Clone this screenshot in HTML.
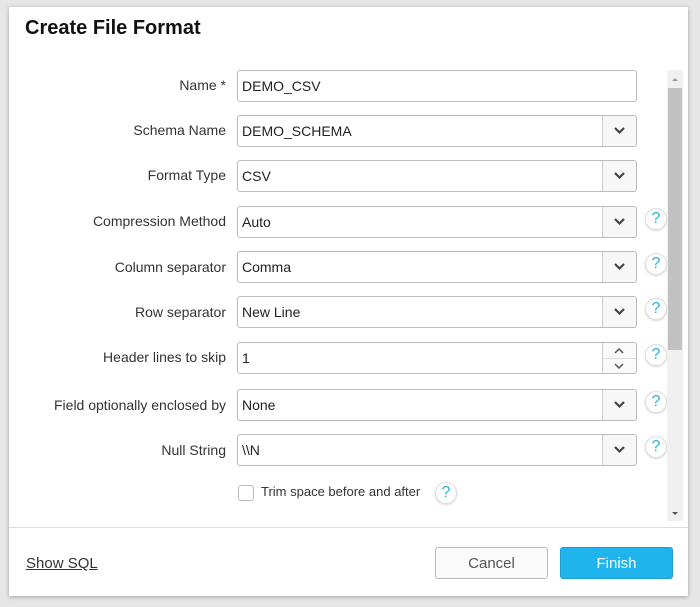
<!DOCTYPE html>
<html><head><style>
body{margin:0;width:700px;height:607px;background:#dcdcdc;font-family:"Liberation Sans",sans-serif;position:relative;overflow:hidden}
.bg{position:absolute;left:0;top:0;width:700px;height:607px;background:#e6e6e6}
.dlg{position:absolute;left:9px;top:7px;width:679px;height:589px;background:#fff;box-shadow:0 1px 4px rgba(0,0,0,.3)}
h1{position:absolute;left:16px;top:10px;margin:0;font-size:20px;font-weight:bold;color:#111}
.lab{position:absolute;right:462px;font-size:14px;color:#333;text-align:right;white-space:nowrap}
.in{position:absolute;left:228px;width:394px;height:30px;border:1px solid #bbb;border-radius:3px;font-size:14px;color:#222;line-height:30px;padding-left:4px;box-sizing:content-box}
.dd{position:absolute;right:0;top:0;width:33px;height:30px;border-left:1px solid #ccc;background:#f7f7f7;border-radius:0 3px 3px 0}
.dd svg{position:absolute;left:11px;top:11px}
.q{position:absolute;left:636px;width:20px;height:20px;border:1px solid #ddd;border-radius:50%;color:#2ab0d8;font-size:16px;text-align:center;line-height:20px;box-shadow:0 1px 2px rgba(0,0,0,.15);background:#fff}
.sb{position:absolute;left:658px;top:63px;width:16px;height:451px;background:#f0f0f0;z-index:2}
.th{position:absolute;left:1px;top:18px;width:14px;height:262px;background:#c1c1c1}
.foot{position:absolute;left:0;top:520px;width:679px;border-top:1px solid #ddd}
.btn{position:absolute;top:540px;height:30px;width:111px;border-radius:3px;font-size:15px;text-align:center;line-height:32px}
</style></head><body>
<div class="bg"></div>
<div class="dlg">
<h1>Create File Format</h1>
<div class="lab" style="top:70px">Name *</div>
<div class="in" style="top:63px">DEMO_CSV</div>

<div class="lab" style="top:115px">Schema Name</div>
<div class="in" style="top:108px">DEMO_SCHEMA<div class="dd"><svg width="11" height="8"><path d="M1 1l4.5 4.5L10 1" stroke="#444" stroke-width="2.2" fill="none"/></svg></div></div>

<div class="lab" style="top:160px">Format Type</div>
<div class="in" style="top:153px">CSV<div class="dd"><svg width="11" height="8"><path d="M1 1l4.5 4.5L10 1" stroke="#444" stroke-width="2.2" fill="none"/></svg></div></div>

<div class="lab" style="top:206px">Compression Method</div>
<div class="in" style="top:199px">Auto<div class="dd"><svg width="11" height="8"><path d="M1 1l4.5 4.5L10 1" stroke="#444" stroke-width="2.2" fill="none"/></svg></div></div>
<div class="q" style="top:201px">?</div>

<div class="lab" style="top:252px">Column separator</div>
<div class="in" style="top:244px">Comma<div class="dd"><svg width="11" height="8"><path d="M1 1l4.5 4.5L10 1" stroke="#444" stroke-width="2.2" fill="none"/></svg></div></div>
<div class="q" style="top:246px">?</div>

<div class="lab" style="top:297px">Row separator</div>
<div class="in" style="top:289px">New Line<div class="dd"><svg width="11" height="8"><path d="M1 1l4.5 4.5L10 1" stroke="#444" stroke-width="2.2" fill="none"/></svg></div></div>
<div class="q" style="top:291px">?</div>

<div class="lab" style="top:342px">Header lines to skip</div>
<div class="in" style="top:335px">1<div class="dd" style="background:#fafafa"><div style="position:absolute;left:0;top:15px;width:33px;border-top:1px solid #ddd"></div><svg width="10" height="6" style="left:11px;top:5px"><path d="M1 5l4-4 4 4" stroke="#555" stroke-width="1.5" fill="none"/></svg><svg width="10" height="6" style="left:11px;top:20px"><path d="M1 1l4 4 4-4" stroke="#555" stroke-width="1.5" fill="none"/></svg></div></div>
<div class="q" style="top:337px">?</div>

<div class="lab" style="top:390px">Field optionally enclosed by</div>
<div class="in" style="top:382px">None<div class="dd"><svg width="11" height="8"><path d="M1 1l4.5 4.5L10 1" stroke="#444" stroke-width="2.2" fill="none"/></svg></div></div>
<div class="q" style="top:384px">?</div>

<div class="lab" style="top:435px">Null String</div>
<div class="in" style="top:427px">\\N<div class="dd"><svg width="11" height="8"><path d="M1 1l4.5 4.5L10 1" stroke="#444" stroke-width="2.2" fill="none"/></svg></div></div>
<div class="q" style="top:429px">?</div>

<div style="position:absolute;left:229px;top:478px;width:14px;height:14px;border:1px solid #bbb;border-radius:3px"></div>
<div style="position:absolute;left:252px;top:477px;font-size:13px;color:#333">Trim space before and after</div>
<div class="q" style="left:426px;top:475px">?</div>

<div class="sb"><svg width="16" height="10" style="position:absolute;top:4px"><path d="M5 7l3-3 3 3z" fill="#999"/></svg><div class="th"></div><svg width="16" height="10" style="position:absolute;bottom:2px"><path d="M5 3l3 3 3-3z" fill="#555"/></svg></div>

<div class="foot"></div>
<div style="position:absolute;left:17px;top:548px;font-size:15px;color:#333;text-decoration:underline">Show SQL</div>
<div class="btn" style="left:426px;border:1px solid #bbb;background:#fafafa;color:#555">Cancel</div>
<div class="btn" style="left:551px;border:1px solid #1a9fd0;background:#1fb4ec;color:#fff">Finish</div>
</div>
</body></html>
